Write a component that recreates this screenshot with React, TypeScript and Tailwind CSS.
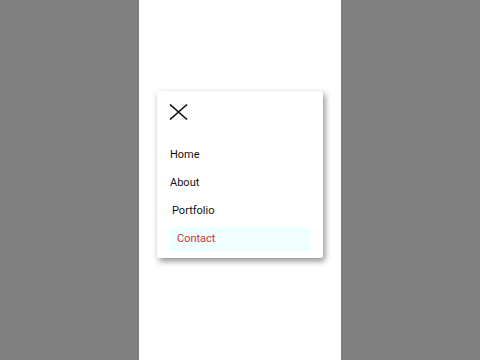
import React from "react";

const links = [
  { label: "Home", shift: "pl-[1px]" },
  { label: "About", shift: "pl-[1px]" },
  { label: "Portfolio", shift: "pl-[3px]" },
  { label: "Contact", shift: "pl-[8px]", active: true },
];

const App = () => {
  return (
    <div className="flex h-[360px] w-[480px] justify-center bg-[#808080] font-['Roboto',sans-serif]">
      <div className="h-full w-[202px] bg-white pl-[18px] pt-[91px]">
        <div className="h-[167px] w-[166px] rounded-[2px] bg-white pl-[12px] pr-[12px] pt-[13px] shadow-[2px_3px_6px_rgba(0,0,0,0.45)]">
          {/* close button */}
          <button className="block h-[16px] w-[19px]">
            <svg width="19" height="16" viewBox="0 0 19 16" fill="none">
              <path d="M1 0.5 L18 15.5 M18 0.5 L1 15.5" stroke="#111" strokeWidth="1.6" />
            </svg>
          </button>
          <nav className="mt-[23px] flex flex-col gap-[3px]">
            {links.map((link) => (
              <a
                key={link.label}
                className={`flex h-[25px] items-center text-[11px] ${link.shift} ${
                  link.active ? "bg-[#f0ffff] text-[#d8302f]" : "text-[#111]"
                }`}
              >
                {link.label}
              </a>
            ))}
          </nav>
        </div>
      </div>
    </div>
  );
};

export default App;
